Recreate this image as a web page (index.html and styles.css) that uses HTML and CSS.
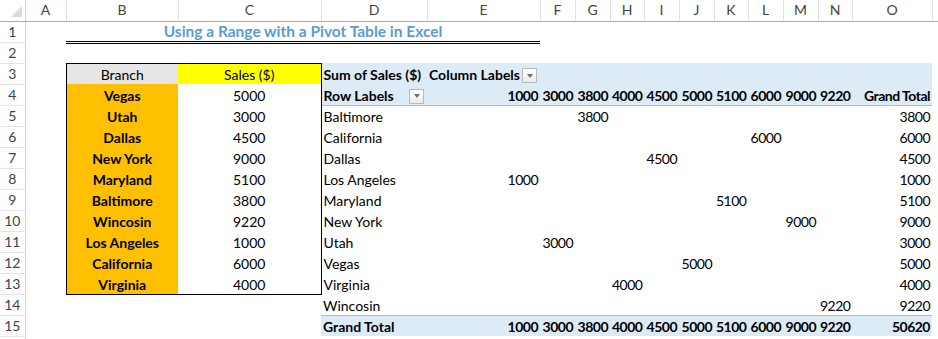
FILE: index.html
```html
<!DOCTYPE html>
<html lang="en">
<head>
    <meta charset="UTF-8">
    <title>Using a Range with a Pivot Table in Excel</title>
    <link rel="stylesheet" href="styles.css">
</head>
<body>
    <table class="sheet">
        <colgroup>
            <col class="w-hd">
            <col class="w-a">
            <col class="w-b">
            <col class="w-c">
            <col class="w-d">
            <col class="w-e">
            <col class="w-n"><col class="w-n"><col class="w-n4"><col class="w-n"><col class="w-n"><col class="w-n4"><col class="w-n"><col class="w-n"><col class="w-n4">
            <col class="w-o">
            <col>
        </colgroup>

        <!-- column letters -->
        <tr class="colhead">
            <th class="corner"><div class="corner-in"><span class="corner-tri"></span></div></th>
            <th>A</th><th>B</th><th>C</th><th>D</th><th>E</th>
            <th>F</th><th>G</th><th>H</th><th>I</th><th>J</th><th>K</th><th>L</th><th>M</th><th>N</th>
            <th>O</th><th class="last"></th>
        </tr>

        <!-- title -->
        <tr>
            <th class="rowhead">1</th><td></td>
            <td colspan="4" class="title">Using a Range with a Pivot Table in Excel</td>
            <td></td><td></td><td></td><td></td><td></td><td></td><td></td><td></td><td></td><td></td><td></td>
        </tr>
        <tr>
            <th class="rowhead">2</th><td></td>
            <td></td><td></td><td></td><td></td>
            <td></td><td></td><td></td><td></td><td></td><td></td><td></td><td></td><td></td><td></td><td></td>
        </tr>

        <!-- source range header + pivot header -->
        <tr>
            <th class="rowhead">3</th><td></td>
            <td class="src-b src-top src-head">Branch</td>
            <td class="src-c src-top src-yellow">Sales ($)</td>
            <td class="pv pv-top b">Sum of Sales ($)</td>
            <td class="pv pv-top b"><div class="with-dd">Column Labels <span class="dd"></span></div></td>
            <td class="pv pv-top"></td><td class="pv pv-top"></td><td class="pv pv-top"></td><td class="pv pv-top"></td><td class="pv pv-top"></td>
            <td class="pv pv-top"></td><td class="pv pv-top"></td><td class="pv pv-top"></td><td class="pv pv-top"></td><td class="pv pv-top"></td>
            <td></td>
        </tr>
        <tr>
            <th class="rowhead">4</th><td></td>
            <td class="src-b">Vegas</td><td class="src-c">5000</td>
            <td class="pv pv-lbl b"><div class="with-dd">Row Labels <span class="dd"></span></div></td>
            <td class="pv pv-lbl b n">1000</td><td class="pv pv-lbl b n">3000</td><td class="pv pv-lbl b n">3800</td><td class="pv pv-lbl b n">4000</td><td class="pv pv-lbl b n">4500</td>
            <td class="pv pv-lbl b n">5000</td><td class="pv pv-lbl b n">5100</td><td class="pv pv-lbl b n">6000</td><td class="pv pv-lbl b n">9000</td><td class="pv pv-lbl b n">9220</td>
            <td class="pv pv-lbl b n">Grand Total</td>
            <td></td>
        </tr>

        <!-- pivot body -->
        <tr>
            <th class="rowhead">5</th><td></td>
            <td class="src-b">Utah</td><td class="src-c">3000</td>
            <td class="name">Baltimore</td>
            <td></td><td></td><td class="n">3800</td><td></td><td></td><td></td><td></td><td></td><td></td><td></td>
            <td class="n">3800</td><td></td>
        </tr>
        <tr>
            <th class="rowhead">6</th><td></td>
            <td class="src-b">Dallas</td><td class="src-c">4500</td>
            <td class="name">California</td>
            <td></td><td></td><td></td><td></td><td></td><td></td><td></td><td class="n">6000</td><td></td><td></td>
            <td class="n">6000</td><td></td>
        </tr>
        <tr>
            <th class="rowhead">7</th><td></td>
            <td class="src-b">New York</td><td class="src-c">9000</td>
            <td class="name">Dallas</td>
            <td></td><td></td><td></td><td></td><td class="n">4500</td><td></td><td></td><td></td><td></td><td></td>
            <td class="n">4500</td><td></td>
        </tr>
        <tr>
            <th class="rowhead">8</th><td></td>
            <td class="src-b">Maryland</td><td class="src-c">5100</td>
            <td class="name">Los Angeles</td>
            <td class="n">1000</td><td></td><td></td><td></td><td></td><td></td><td></td><td></td><td></td><td></td>
            <td class="n">1000</td><td></td>
        </tr>
        <tr>
            <th class="rowhead">9</th><td></td>
            <td class="src-b">Baltimore</td><td class="src-c">3800</td>
            <td class="name">Maryland</td>
            <td></td><td></td><td></td><td></td><td></td><td></td><td class="n">5100</td><td></td><td></td><td></td>
            <td class="n">5100</td><td></td>
        </tr>
        <tr>
            <th class="rowhead">10</th><td></td>
            <td class="src-b">Wincosin</td><td class="src-c">9220</td>
            <td class="name">New York</td>
            <td></td><td></td><td></td><td></td><td></td><td></td><td></td><td></td><td class="n">9000</td><td></td>
            <td class="n">9000</td><td></td>
        </tr>
        <tr>
            <th class="rowhead">11</th><td></td>
            <td class="src-b">Los Angeles</td><td class="src-c">1000</td>
            <td class="name">Utah</td>
            <td></td><td class="n">3000</td><td></td><td></td><td></td><td></td><td></td><td></td><td></td><td></td>
            <td class="n">3000</td><td></td>
        </tr>
        <tr>
            <th class="rowhead">12</th><td></td>
            <td class="src-b">California</td><td class="src-c">6000</td>
            <td class="name">Vegas</td>
            <td></td><td></td><td></td><td></td><td></td><td class="n">5000</td><td></td><td></td><td></td><td></td>
            <td class="n">5000</td><td></td>
        </tr>
        <tr>
            <th class="rowhead">13</th><td></td>
            <td class="src-b src-bottom">Virginia</td><td class="src-c src-bottom">4000</td>
            <td class="name">Virginia</td>
            <td></td><td></td><td></td><td class="n">4000</td><td></td><td></td><td></td><td></td><td></td><td></td>
            <td class="n">4000</td><td></td>
        </tr>
        <tr>
            <th class="rowhead">14</th><td></td>
            <td></td><td></td>
            <td class="name">Wincosin</td>
            <td></td><td></td><td></td><td></td><td></td><td></td><td></td><td></td><td></td><td class="n">9220</td>
            <td class="n">9220</td><td></td>
        </tr>

        <!-- grand total -->
        <tr>
            <th class="rowhead">15</th><td></td>
            <td></td><td></td>
            <td class="pv pv-total b">Grand Total</td>
            <td class="pv pv-total b n">1000</td><td class="pv pv-total b n">3000</td><td class="pv pv-total b n">3800</td><td class="pv pv-total b n">4000</td><td class="pv pv-total b n">4500</td>
            <td class="pv pv-total b n">5000</td><td class="pv pv-total b n">5100</td><td class="pv pv-total b n">6000</td><td class="pv pv-total b n">9000</td><td class="pv pv-total b n">9220</td>
            <td class="pv pv-total b n">50620</td><td></td>
        </tr>
        <tr>
            <th class="rowhead"></th><td></td>
            <td></td><td></td><td></td><td></td>
            <td></td><td></td><td></td><td></td><td></td><td></td><td></td><td></td><td></td><td></td><td></td>
        </tr>
    </table>
</body>
</html>
```

FILE: styles.css
```css
/* sheet basics */
body {
    margin: 0;
    background: #fff;
    font-family: Lato, "Liberation Sans", sans-serif;
    overflow: hidden;
}

.sheet {
    width: 938px;
    table-layout: fixed;
    border-collapse: collapse;
    font-size: 14px;
    color: #000;
}
.sheet th,
.sheet td {
    box-sizing: border-box;
    height: 21px;
    padding: 0 2px;
    line-height: 19px;
    white-space: nowrap;
    overflow: visible;
    vertical-align: bottom;
}

/* column widths */
.w-hd { width: 25px; }
.w-a { width: 41px; }
.w-b { width: 112px; }
.w-c { width: 143px; }
.w-d { width: 106px; }
.w-e { width: 113px; }
.w-n { width: 35px; }
.w-n4 { width: 34px; }
.w-o { width: 80px; }

/* headers */
.colhead th {
    padding: 0;
    font-weight: 400;
    font-size: 14px;
    color: #444;
    line-height: 20px;
    vertical-align: middle;
    border-bottom: 1px solid #ababab;
    border-right: 1px solid #e1e1e1;
    text-align: center;
}
.colhead th.last {
    border-right: none;
}
.colhead th.corner {
    border-right: 1px solid #d4d4d4;
}
.corner-in {
    height: 20px;
    display: flex;
    justify-content: flex-end;
    align-items: flex-end;
    padding: 0 3px 3px 0;
    box-sizing: border-box;
}
.corner-tri {
    width: 0;
    height: 0;
    border-left: 11px solid transparent;
    border-bottom: 11px solid #dcdcdc;
}
.sheet .rowhead {
    padding: 0;
    font-weight: 400;
    font-size: 14px;
    color: #444;
    vertical-align: middle;
    text-align: center;
    border-right: 1px solid #d4d4d4;
    border-bottom: 1px solid #e3e3e3;
}

/* title */
.title {
    text-align: center;
    font-weight: 700;
    font-size: 15.5px;
    color: #5b9bd5;
    border-bottom: 3px double #000;
}

/* source range */
.src-b {
    background: #ffc000;
    font-weight: 700;
    text-align: center;
    border-left: 1px solid #000;
}
.src-c {
    text-align: center;
    border-right: 1px solid #000;
}
.src-top {
    border-top: 1px solid #000;
}
.src-bottom {
    border-bottom: 1px solid #000;
}
.src-head {
    background: #e7e6e6;
    font-weight: 400;
}
.src-yellow {
    background: #ffff00;
}

/* pivot */
.pv {
    background: #ddebf7;
}
.pv-lbl {
    border-bottom: 1px solid #9bc2e6;
}
.pv-total {
    border-top: 1px solid #9bc2e6;
}
.b {
    font-weight: 700;
}
.n {
    text-align: right;
    letter-spacing: -0.5px;
}
.name {
    text-align: left;
}
.with-dd {
    display: flex;
    justify-content: space-between;
    align-items: flex-end;
    height: 19px;
}
.dd {
    width: 13px;
    height: 13px;
    border: 1px solid #b9b9b9;
    background: linear-gradient(#ffffff, #ececec);
    display: flex;
    align-items: center;
    justify-content: center;
    margin: 0 1px 1px 0;
}
.dd::after {
    content: "";
    border-top: 4px solid #6f6f6f;
    border-left: 3.5px solid transparent;
    border-right: 3.5px solid transparent;
}
```
